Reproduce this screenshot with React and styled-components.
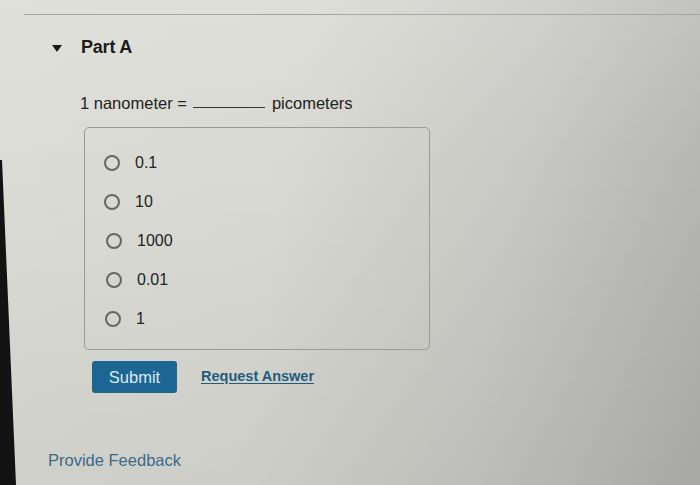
import React from "react";
import styled, { createGlobalStyle } from "styled-components";

const Global = createGlobalStyle`
  html, body { margin: 0; padding: 0; }
  body { font-family: "Liberation Sans", Arial, sans-serif; }
`;

const Page = styled.div`
  position: relative;
  width: 700px;
  height: 485px;
  overflow: hidden;
  box-sizing: border-box;
  padding-top: 14px;
  background:
    linear-gradient(180deg, rgba(255,255,255,0.14) 0%, rgba(0,0,0,0) 35%, rgba(0,0,0,0.05) 100%),
    linear-gradient(100deg, #dcdcd6 0%, #d9d9d3 40%, #c8c8c4 70%, #b0b1ae 100%);
  color: #222;
  &::after {
    content: "";
    position: absolute;
    left: 0;
    top: 0;
    width: 20px;
    height: 100%;
    background: #121212;
    clip-path: polygon(0 160px, 2px 160px, 16px 100%, 0 100%);
  }
`;

const TopRule = styled.div`
  margin-left: 24px;
  border-top: 1px solid #a6a7a2;
`;

const Header = styled.div`
  display: flex;
  align-items: center;
  margin-top: 22px;
  padding-left: 52px;
  height: 20px;
`;

const Caret = styled.svg`
  width: 10px;
  height: 7px;
  margin-right: 19px;
  margin-top: 2px;
`;

const Title = styled.h2`
  margin: 0;
  font-size: 18px;
  font-weight: 700;
  color: #1c1c1c;
  line-height: 20px;
  letter-spacing: -0.2px;
`;

const Question = styled.p`
  margin: 36px 0 0 80px;
  font-size: 16.5px;
  line-height: 20px;
  color: #222;
  display: flex;
  align-items: baseline;
`;

const Blank = styled.span`
  display: inline-block;
  width: 72px;
  margin: 0 7px 0 6px;
  border-bottom: 1px solid #333;
  transform: translateY(-1px);
`;

const Choices = styled.div`
  box-sizing: border-box;
  margin: 14px 0 0 84px;
  width: 346px;
  height: 223px;
  border: 1px solid #9a9a96;
  border-radius: 5px;
  padding: 15px 0 0 19px;
  display: flex;
  flex-direction: column;
`;

const Choice = styled.label`
  display: flex;
  align-items: center;
  height: 39px;
  font-size: 16px;
  color: #222;
  padding-left: ${p => p.$shift}px;
`;

const Radio = styled.span`
  box-sizing: border-box;
  width: 16px;
  height: 16px;
  border: 2px solid #666664;
  border-radius: 50%;
  margin-right: 15px;
`;

const Actions = styled.div`
  display: flex;
  align-items: center;
  gap: 24px;
  margin: 11px 0 0 92px;
`;

const SubmitButton = styled.button`
  width: 85px;
  height: 32px;
  border: none;
  border-radius: 3px;
  background: #1c6694;
  color: #dfe8ee;
  font-family: "Liberation Sans", Arial, sans-serif;
  font-size: 16.5px;
  padding: 0;
`;

const LinkText = styled.span`
  font-size: 14.5px;
  font-weight: 700;
  color: #1f5c7e;
  text-decoration: underline;
  text-underline-offset: 2px;
  margin-top: -2px;
`;

const Feedback = styled.div`
  margin: 57px 0 0 48px;
  font-size: 16.5px;
  line-height: 20px;
  color: #3a6a88;
`;

const options = [
  { label: "0.1", shift: 0 },
  { label: "10", shift: 0 },
  { label: "1000", shift: 2 },
  { label: "0.01", shift: 2 },
  { label: "1", shift: 1 },
];

export default function App() {
  return (
    <>
      <Global />
      <Page>
        <TopRule />
        <Header>
          <Caret viewBox="0 0 10 7">
            <path d="M0 0 L10 0 L5 7 Z" fill="#1a1a1a" />
          </Caret>
          <Title>Part A</Title>
        </Header>
        <Question>
          1 nanometer =<Blank />picometers
        </Question>
        <Choices>
          {options.map(o => (
            <Choice key={o.label} $shift={o.shift}>
              <Radio />
              {o.label}
            </Choice>
          ))}
        </Choices>
        <Actions>
          <SubmitButton>Submit</SubmitButton>
          <LinkText>Request Answer</LinkText>
        </Actions>
        <Feedback>Provide Feedback</Feedback>
      </Page>
    </>
  );
}
